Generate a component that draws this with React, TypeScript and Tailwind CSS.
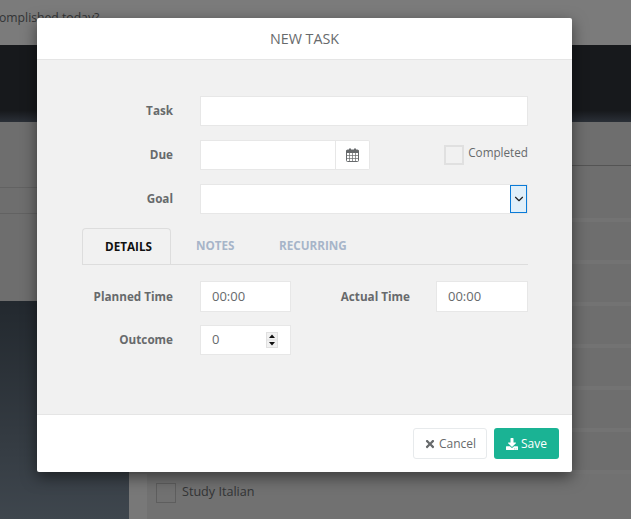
import { FaTimes, FaDownload } from "react-icons/fa";
import { LuChevronDown } from "react-icons/lu";

const inputBox = "bg-white border border-[#e7e7e7]";

function Label({ children, className = "" }: { children: React.ReactNode; className?: string }) {
  return <label className={`font-bold text-[11.7px] text-[#676a6c] text-right ${className}`}>{children}</label>;
}

const CalendarIcon = () => (
  <svg width="13" height="14" viewBox="0 0 13 14" className="text-[#676a6c]">
    <rect x="0.5" y="2" width="12" height="11.5" rx="1" fill="none" stroke="currentColor" />
    <rect x="0.5" y="2" width="12" height="3" fill="currentColor" />
    <rect x="3" y="0.5" width="2" height="3.5" fill="currentColor" />
    <rect x="8" y="0.5" width="2" height="3.5" fill="currentColor" />
    <path d="M3.5 5v8M6.5 5v8M9.5 5v8M1 7.5h11M1 10.5h11" stroke="currentColor" strokeWidth="0.7" fill="none" />
  </svg>
);

const SpinnerIcon = () => (
  <svg width="12" height="16" viewBox="0 0 12 16">
    <rect width="12" height="16" fill="#e0e0e0" />
    <rect x="1" y="1" width="10" height="6.5" fill="#f1f1f1" />
    <rect x="1" y="8.5" width="10" height="6.5" fill="#f1f1f1" />
    <path d="M6 2.5 9 6H3z" fill="#111" />
    <path d="M6 13.5 3 10h6z" fill="#111" />
  </svg>
);

const listRows = [0, 1, 2, 3, 4, 5];

function Background() {
  return (
    <div className="flex flex-col h-[519px] w-[631px] overflow-hidden bg-[#dcdcdc]">
      <div className="h-[45px] shrink-0 bg-[#f6f6f6] pt-[9px] -ml-[1px] text-[12.2px] text-[#676a6c] whitespace-nowrap">
        omplished today?
      </div>
      <div className="h-[77px] shrink-0 bg-gradient-to-b from-[#2e3238] from-85% to-[#566070]"></div>
      <div className="flex flex-1 min-h-0">
        <div className="w-[129px] flex flex-col">
          <div className="h-[179px] shrink-0 bg-[#dcdcdc] pt-[65px]">
            <div className="h-[27px] border-y border-[#c4c4c4]"></div>
          </div>
          <div className="flex-1 bg-gradient-to-b from-[#46525e] to-[#7e8d9c]"></div>
        </div>
        <div className="flex-1 flex flex-col bg-[#dcdcdc]">
          <div className="h-[44px] shrink-0 border-b border-[#a8a8a8]"></div>
          <div className="h-[52px] shrink-0"></div>
          {listRows.map((r) => (
            <div key={r} className="h-[42px] shrink-0 border-t-4 border-[#e6e6e6]"></div>
          ))}
          <div className="flex-1 border-t-4 border-[#e6e6e6] bg-[#e2e2e2] flex">
            <div className="w-[18px] bg-[#f0f0f0]"></div>
            <div className="pl-[9px] pt-[9px] flex items-start gap-[6px] text-[12.6px] text-[#676a6c]">
              <span className="w-[20px] h-[20px] border border-[#bdbdbd]"></span>
              <span className="leading-[18px]">Study Italian</span>
            </div>
          </div>
        </div>
      </div>
    </div>
  );
}

export default function App() {
  return (
    <div className="relative w-[631px] h-[519px] overflow-hidden font-['Open_Sans',sans-serif]">
      <Background />
      <div className="absolute inset-0 bg-black/50"></div>
      <div className="absolute left-[37px] top-[18px] w-[535px] h-[454px] flex flex-col bg-white rounded-[2px] shadow-[0_5px_15px_rgba(0,0,0,0.5)]">
        <div className="h-[42px] shrink-0 flex items-center justify-center border-b border-[#e5e5e5] text-[14.3px] text-[#676a6c]">
          NEW TASK
        </div>
        <div className="flex-1 bg-[#f1f1f1] border-b border-[#e5e5e5] pt-[36px] pl-[45px] pr-[44px]">
          <div className="flex flex-col gap-[14px]">
            <div className="flex items-center">
              <Label className="w-[91px]">Task</Label>
              <div className={`ml-[27px] flex-1 h-[30px] ${inputBox}`}></div>
            </div>
            <div className="flex items-center">
              <Label className="w-[91px]">Due</Label>
              <div className={`ml-[27px] w-[136px] h-[30px] ${inputBox}`}></div>
              <div className={`w-[34px] h-[30px] flex items-center justify-center rounded-r-[2px] border-l-0 ${inputBox}`}>
                <CalendarIcon />
              </div>
              <div className="ml-auto flex items-center gap-[4px]">
                <span className="w-[20px] h-[20px] border-2 border-[#e0e0e0] bg-[#f1f1f1]"></span>
                <span className="text-[11.7px] text-[#676a6c] -mt-[4px]">Completed</span>
              </div>
            </div>
            <div className="flex items-center">
              <Label className="w-[91px]">Goal</Label>
              <div className={`ml-[27px] flex-1 h-[30px] flex justify-end items-center ${inputBox}`}>
                <div className="w-[17px] h-[28px] flex items-center justify-center bg-[#e1f0fa] border border-[#0a7bd8]">
                  <LuChevronDown className="w-[14px] h-[14px] text-[#222]" strokeWidth={2} />
                </div>
              </div>
            </div>
          </div>
          <div className="mt-[14px] flex h-[37px] border-b border-[#dddddd] text-[11.7px] font-bold">
            <div className="w-[89px] h-[37px] flex items-center pl-[22px] border border-b-0 border-[#dddddd] rounded-t-[4px] text-[#111]">DETAILS</div>
            <div className="w-[83px] flex items-center pl-[25px] text-[#a7b5c9]">NOTES</div>
            <div className="flex items-center pl-[25px] text-[#a7b5c9]">RECURRING</div>
          </div>
          <div className="mt-[16px] flex flex-col gap-[13px]">
            <div className="flex items-center">
              <Label className="w-[91px]">Planned Time</Label>
              <div className={`ml-[27px] w-[91px] h-[31px] flex items-center pl-[11px] text-[13px] text-[#676a6c] ${inputBox}`}>00:00</div>
              <Label className="w-[119px]">Actual Time</Label>
              <div className={`ml-[26px] flex-1 h-[31px] flex items-center pl-[11px] text-[13px] text-[#676a6c] ${inputBox}`}>00:00</div>
            </div>
            <div className="flex items-center">
              <Label className="w-[91px]">Outcome</Label>
              <div className={`ml-[27px] w-[91px] h-[30px] flex items-center justify-between pl-[11px] pr-[12px] text-[13px] text-[#676a6c] ${inputBox}`}>
                0
                <SpinnerIcon />
              </div>
            </div>
          </div>
        </div>
        <div className="h-[57px] shrink-0 flex items-center justify-end gap-[7px] pr-[13px]">
          <button className="h-[31px] w-[74px] flex items-center justify-center gap-[3px] border border-[#e7eaec] rounded-[3px] text-[12px] text-[#676a6c]">
            <FaTimes className="text-[12px]" /> Cancel
          </button>
          <button className="h-[31px] w-[65px] flex items-center justify-center gap-[3px] bg-[#1ab394] rounded-[3px] text-[12px] text-white">
            <FaDownload className="text-[12px]" /> Save
          </button>
        </div>
      </div>
    </div>
  );
}
